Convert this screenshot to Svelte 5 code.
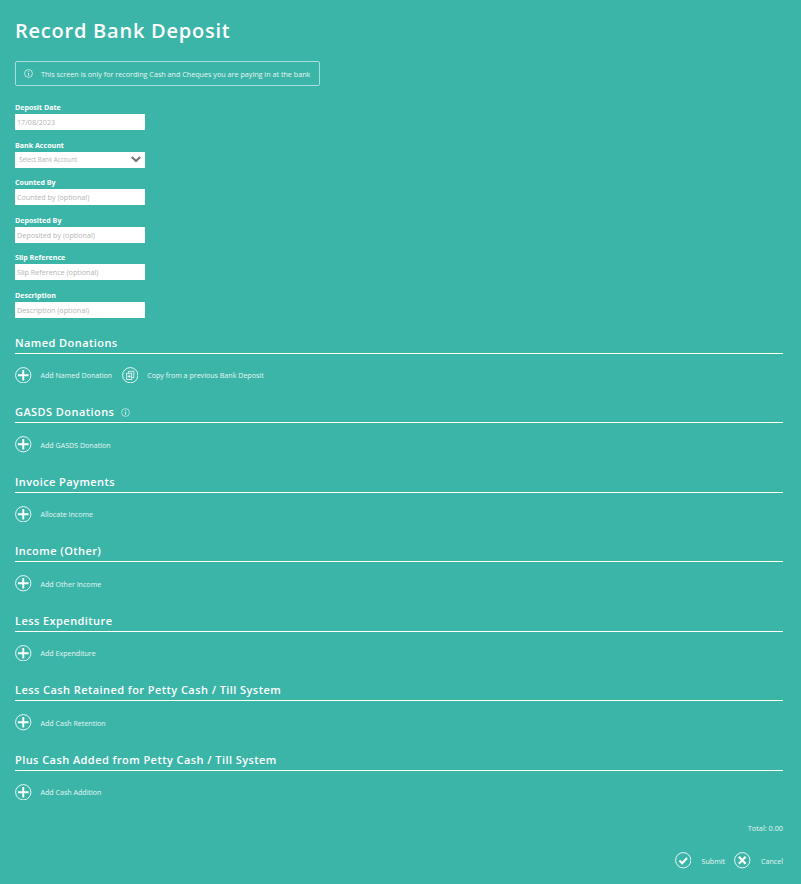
<script>
	const fields = [
		{ label: 'Deposit Date', value: '17/08/2023' },
		{ label: 'Bank Account', select: 'Select Bank Account' },
		{ label: 'Counted By', placeholder: 'Counted by (optional)' },
		{ label: 'Deposited By', placeholder: 'Deposited by (optional)' },
		{ label: 'Slip Reference', placeholder: 'Slip Reference (optional)' },
		{ label: 'Description', placeholder: 'Description (optional)' }
	];

	const sections = [
		{ title: 'Named Donations', add: 'Add Named Donation', copy: true },
		{ title: 'GASDS Donations', add: 'Add GASDS Donation', info: true },
		{ title: 'Invoice Payments', add: 'Allocate Income' },
		{ title: 'Income (Other)', add: 'Add Other Income' },
		{ title: 'Less Expenditure', add: 'Add Expenditure' },
		{ title: 'Less Cash Retained for Petty Cash / Till System', add: 'Add Cash Retention' },
		{ title: 'Plus Cash Added from Petty Cash / Till System', add: 'Add Cash Addition' }
	];
</script>

{#snippet infoIcon(size)}
	<svg width={size} height={size} viewBox="0 0 16 16" fill="none" stroke="currentColor" stroke-width="1.3">
		<circle cx="8" cy="8" r="7" />
		<path d="M8 7v4.8M8 4v1.6" stroke-width="1.8" />
	</svg>
{/snippet}

{#snippet circleIcon(kind)}
	<svg class="round" width="17" height="17" viewBox="0 0 17 17" fill="none" stroke="#fff">
		<circle cx="8.5" cy="8.5" r="7.9" stroke-width="0.9" />
		{#if kind === 'plus'}
			<path d="M8.5 3v11M3 8.5h11" stroke-width="2" />
		{:else if kind === 'check'}
			<path d="M4.6 8.8l2.8 2.8 5-5.4" stroke-width="2" />
		{:else if kind === 'cross'}
			<path d="M5 5l7 7M12 5l-7 7" stroke-width="2.2" />
		{:else if kind === 'copy'}
			<g stroke-width="0.8">
				<rect x="4.8" y="6.4" width="5.2" height="6.4" />
				<path d="M6.8 6.4V4.4h5.4v6.6H10" />
				<path d="M7.4 8v3.2M5.8 9.6h3.2" />
			</g>
		{/if}
	</svg>
{/snippet}

<main class="page">
	<h1>Record Bank Deposit</h1>

	<div class="notice">
		<span class="notice-icon">{@render infoIcon(9)}</span>
		<span>This screen is only for recording Cash and Cheques you are paying in at the bank</span>
	</div>

	<form class="fields">
		{#each fields as field}
			<div class="field">
				<span class="field-label">{field.label}</span>
				{#if field.select}
					<div class="select">
						<span>{field.select}</span>
						<svg width="10" height="7" viewBox="0 0 10 7" fill="none" stroke="#777" stroke-width="2.2">
							<path d="M0.8 1l4.2 4 4.2-4" />
						</svg>
					</div>
				{:else}
					<input type="text" value={field.value ?? ''} placeholder={field.placeholder ?? ''} />
				{/if}
			</div>
		{/each}
	</form>

	{#each sections as section}
		<section class="section">
			<h2>
				{section.title}
				{#if section.info}
					<span class="heading-info">{@render infoIcon(9)}</span>
				{/if}
			</h2>
			<div class="actions">
				<button type="button">{@render circleIcon('plus')}<span>{section.add}</span></button>
				{#if section.copy}
					<button type="button">{@render circleIcon('copy')}<span>Copy from a previous Bank Deposit</span></button>
				{/if}
			</div>
		</section>
	{/each}

	<div class="total">Total: 0.00</div>

	<div class="footer">
		<button type="button">{@render circleIcon('check')}<span>Submit</span></button>
		<button type="button">{@render circleIcon('cross')}<span>Cancel</span></button>
	</div>
</main>

<style>
	:global(body) {
		background: #3cb5a9;
	}

	.page {
		box-sizing: border-box;
		height: 884px;
		padding: 18px 18px 0 15px;
		background: #3cb5a9;
		color: #fff;
		font-family: 'Open Sans', sans-serif;
		overflow: hidden;
	}

	h1 {
		margin: 0;
		font-size: 20px;
		line-height: 25px;
		font-weight: 600;
		letter-spacing: 0.77px;
	}

	.notice {
		display: flex;
		align-items: center;
		box-sizing: border-box;
		width: 305px;
		height: 25px;
		margin-top: 18px;
		padding-left: 8px;
		border: 1px solid #a5e0da;
		border-radius: 2px;
		font-size: 7.2px;
		color: #e4f6f4;
	}

	.notice-icon {
		display: flex;
		margin-right: 8px;
	}

	.fields {
		display: flex;
		flex-direction: column;
		gap: 6.6px;
		margin-top: 13px;
	}

	.field {
		display: flex;
		flex-direction: column;
	}

	.field-label {
		font-size: 7.1px;
		line-height: 16px;
		height: 15px;
		font-weight: 700;
	}

	input,
	.select {
		box-sizing: border-box;
		width: 130px;
		height: 16px;
		border: 0;
		border-radius: 0;
		background: #fff;
		font-family: inherit;
		font-size: 7.2px;
		outline: none;
	}

	input {
		display: block;
		padding: 0 2px;
		color: #b5b5b5;
	}

	input::placeholder {
		color: #b5b5b5;
		opacity: 1;
	}

	.select {
		display: flex;
		align-items: center;
		justify-content: space-between;
		padding: 0 4px 0 4px;
		font-size: 6.2px;
		color: #b5b5b5;
	}

	.section {
		margin-top: 17px;
	}

	.section:not(:first-of-type) {
		margin-top: 21px;
	}

	h2 {
		display: flex;
		align-items: center;
		margin: 0;
		height: 15px;
		padding-bottom: 3px;
		border-bottom: 1px solid #fff;
		font-size: 11px;
		font-weight: 600;
		letter-spacing: 0.43px;
	}

	.heading-info {
		display: flex;
		margin: 1px 0 0 7px;
		color: #d4f0ed;
	}

	.actions {
		display: flex;
		gap: 9.5px;
		margin-top: 13px;
	}

	button {
		display: flex;
		align-items: center;
		gap: 9px;
		padding: 0;
		border: 0;
		background: none;
		color: #e4f6f4;
		font-family: inherit;
		font-size: 7.1px;
	}

	.round {
		flex: none;
		width: 16.5px;
		height: 16.5px;
	}

	.total {
		margin-top: 23px;
		text-align: right;
		font-size: 7.3px;
		color: #e4f6f4;
	}

	.footer {
		display: flex;
		justify-content: flex-end;
		gap: 9px;
		margin-top: 19px;
	}

	.footer button {
		gap: 10.5px;
	}
</style>
